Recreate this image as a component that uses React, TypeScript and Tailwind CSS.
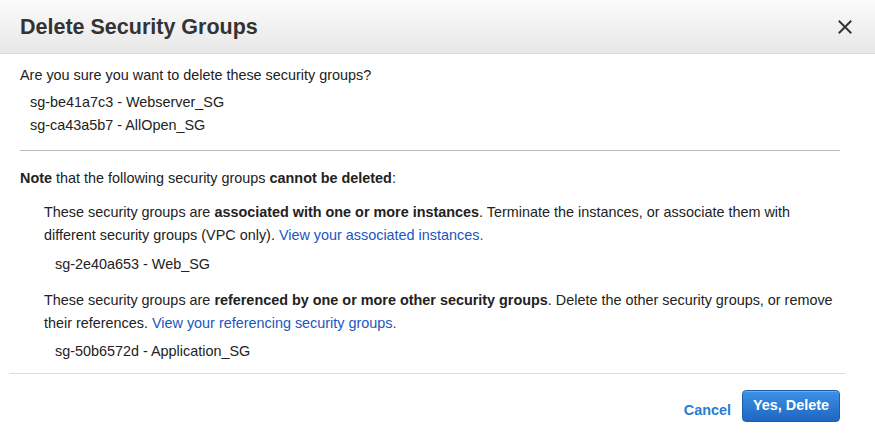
import React from 'react';

const font = { fontFamily: '"Liberation Sans", Arial, Helvetica, sans-serif' };

function CloseIcon() {
  return (
    <svg width="14" height="14" viewBox="0 0 14 14" className="block">
      <path d="M1.5 1.5 L12.5 12.5 M12.5 1.5 L1.5 12.5" stroke="#333" strokeWidth="2" strokeLinecap="square" />
    </svg>
  );
}

export default function App() {
  return (
    <div className="w-[875px] h-[437px] bg-white text-[#222] overflow-hidden" style={font}>
      <div className="h-[54px] flex items-center justify-between pl-5 pr-[23px] pt-px border-b border-[#d8d8d8] bg-gradient-to-b from-[#fbfbfb] to-[#e8e8e8]">
        <h1 className="text-[21.5px] font-bold text-[#333]">Delete Security Groups</h1>
        <button className="p-0">
          <CloseIcon />
        </button>
      </div>

      <div className="px-5 pt-[10px] text-[14.4px] leading-[23px]">
        <p>Are you sure you want to delete these security groups?</p>
        <ul className="mt-[4px] pl-[10px]">
          <li>sg-be41a7c3 - Webserver_SG</li>
          <li>sg-ca43a5b7 - AllOpen_SG</li>
        </ul>
        <div className="mt-[13px] mr-[15px] h-px bg-[#bcbcbc]" />

        <p className="mt-[16px]">
          <b>Note</b> that the following security groups <b>cannot be deleted</b>:
        </p>

        <div className="pl-6">
          <p className="mt-[11px]">
            These security groups are <b>associated with one or more instances</b>. Terminate the instances, or associate them with
            <br />
            different security groups (VPC only).{' '}
            <a className="text-[#1a56c2]">View your associated instances.</a>
          </p>
          <p className="mt-[6px] pl-[11px]">sg-2e40a653 - Web_SG</p>

          <p className="mt-[13px]">
            These security groups are <b>referenced by one or more other security groups</b>. Delete the other security groups, or remove
            <br />
            their references.{' '}
            <a className="text-[#1a56c2]">View your referencing security groups.</a>
          </p>
          <p className="mt-[5px] pl-[11px]">sg-50b6572d - Application_SG</p>
        </div>
      </div>

      <div className="mx-[9px] w-[836px] mt-[10px] h-px bg-[#dadada]" />

      <div className="flex items-center justify-end gap-[11px] pr-[35px] pt-[16px]">
        <button className="text-[14.4px] font-bold text-[#2b7bd4] mt-[9px]">Cancel</button>
        <button className="h-[32px] px-[10px] rounded-[4px] border border-[#1b5fb0] bg-gradient-to-b from-[#3d91e6] to-[#1e66c2] text-white text-[14.4px] font-bold shadow-[inset_0_1px_0_rgba(255,255,255,0.25)]">
          Yes, Delete
        </button>
      </div>
    </div>
  );
}
